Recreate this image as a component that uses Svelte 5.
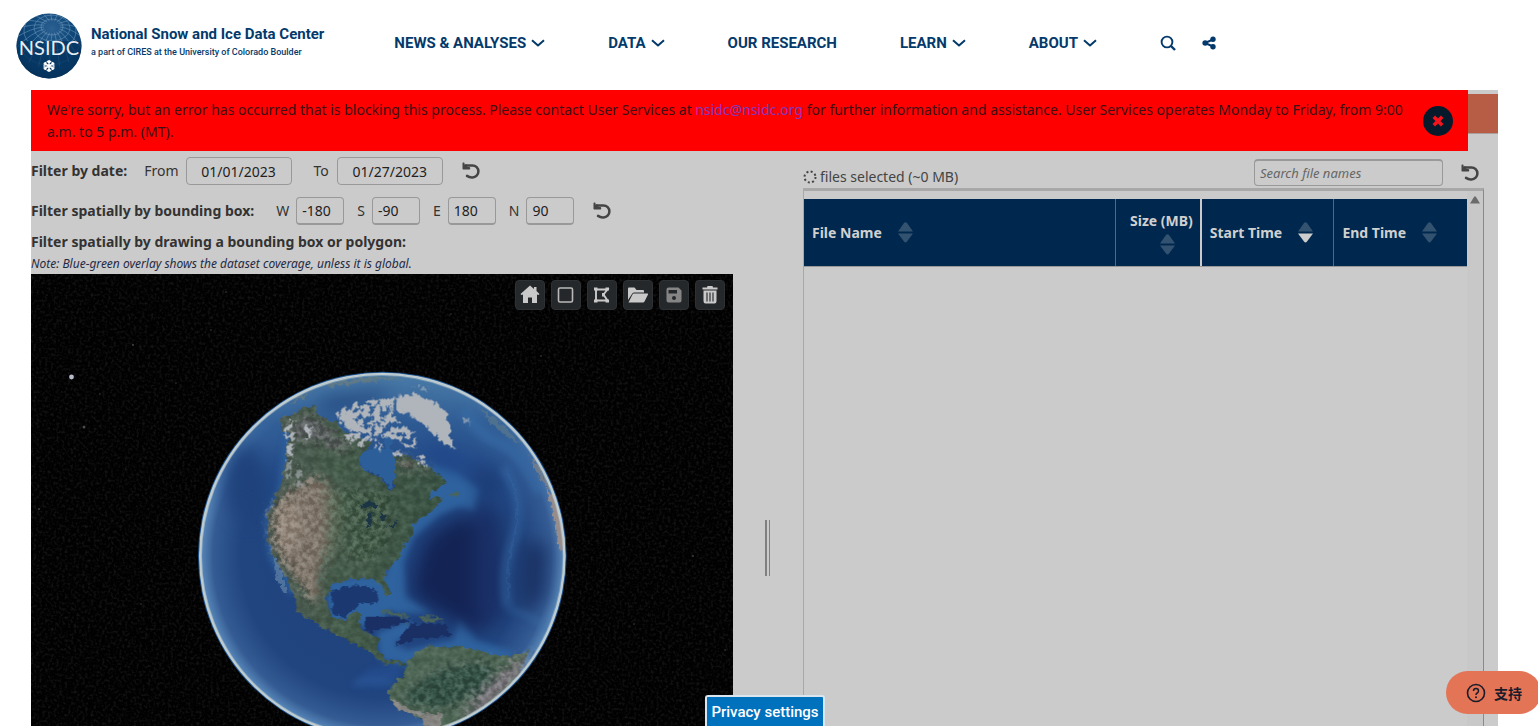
<script>
  const nav = [
    { label: 'NEWS & ANALYSES', menu: true },
    { label: 'DATA', menu: true },
    { label: 'OUR RESEARCH', menu: false },
    { label: 'LEARN', menu: true },
    { label: 'ABOUT', menu: true }
  ];
  const box = [
    { label: 'W', id: 'west', value: '-180' },
    { label: 'S', id: 'south', value: '-90' },
    { label: 'E', id: 'east', value: '180' },
    { label: 'N', id: 'north', value: '90' }
  ];
  const columns = [
    { label: 'File Name', cls: 'name', sorted: false },
    { label: 'Size (MB)', cls: 'size', sorted: false },
    { label: 'Start Time', cls: 'start', sorted: true },
    { label: 'End Time', cls: 'end', sorted: false }
  ];
  const spokes = Array.from({ length: 20 }, (_, i) => {
    const a = (i * Math.PI) / 10;
    return `M${36 + 8 * Math.cos(a)} ${14 + 6 * Math.sin(a)}Q${35 + 20 * Math.cos(a)} ${15 + 14 * Math.sin(a)} ${33 + 34 * Math.cos(a)} ${25 + 30 * Math.sin(a)}`;
  }).join('');
</script>

{#snippet undo()}
  <svg width="18" height="18" viewBox="0 0 18 18" aria-hidden="true">
    <path d="M4 3.400H10.500A5.900 6 0 0 1 10.500 15.400Q7.500 15.600 5 13.900" fill="none" stroke="#454545" stroke-width="2.5" stroke-linecap="round" />
    <path d="M.5 1.300Q.5.500 1.200.500H1.800Q2.500.500 2.500 1.300V2.400L4.500 2.200 5.500 5H7.500Q8.200 5.300 8.200 6V6.700Q8.200 7.400 7.500 7.400H1.300Q.5 7.400.5 6.700Z" fill="#454545" />
  </svg>
{/snippet}

<div class="page">
  <header>
    <a class="brand" href="/" aria-label="National Snow and Ice Data Center">
      <svg width="66" height="66" viewBox="0 0 66 66" aria-hidden="true">
        <defs>
          <radialGradient id="logo" cx=".54" cy=".24" r=".8">
            <stop offset="0" stop-color="#2d6193" />
            <stop offset=".35" stop-color="#10497b" />
            <stop offset=".75" stop-color="#083c6c" />
            <stop offset="1" stop-color="#03284e" />
          </radialGradient>
          <clipPath id="disc"><circle cx="33" cy="33" r="32.5" /></clipPath>
        </defs>
        <circle cx="33" cy="33" r="32.5" fill="url(#logo)" />
        <g clip-path="url(#disc)" fill="none" stroke="#8fb3d0" stroke-width=".7" opacity=".6">
          <path d={spokes} />
          <ellipse cx="36" cy="14" rx="11" ry="8" />
          <ellipse cx="36" cy="15" rx="18" ry="13" />
          <ellipse cx="34" cy="18" rx="26" ry="20" />
          <ellipse cx="33" cy="24" rx="32" ry="28" opacity=".5" />
        </g>
        <g clip-path="url(#disc)"><rect y="28" width="66" height="38" fill="#06345f" opacity=".7" /></g>
        <text x="33" y="42" text-anchor="middle" class="logo-text">NSIDC</text>
        <g stroke="#fff" stroke-width="1.5" transform="translate(33 53)">
          <path d="M0-6V6M-5.2-3 5.2 3M-5.2 3 5.2-3M-2-5 0-3 2-5M-2 5 0 3 2 5M-5.5-.8-2.8-1.5-3.5-4M5.5-.8 2.8-1.5 3.5-4M-5.5.8-2.8 1.5-3.5 4M5.5.8 2.8 1.5 3.5 4" fill="none" />
        </g>
      </svg>
      <span class="names">
        <strong>National Snow and Ice Data Center</strong>
        <small>a part of CIRES at the University of Colorado Boulder</small>
      </span>
    </a>
    <nav>
      {#each nav as item}
        <a href="/">
          {item.label}
          {#if item.menu}
            <svg width="14" height="8" viewBox="0 0 14 8" aria-hidden="true"><path d="M1 1.2 7 6.4 13 1.2" fill="none" stroke="#043a6b" stroke-width="2" stroke-linejoin="round" /></svg>
          {/if}
        </a>
      {/each}
      <span class="tools">
        <button type="button" aria-label="Search">
          <svg width="16" height="16" viewBox="0 0 16 16"><circle cx="7" cy="7" r="5.4" fill="none" stroke="#043a6b" stroke-width="1.9" /><path d="M11 11 15 15" stroke="#043a6b" stroke-width="2.4" /></svg>
        </button>
        <button type="button" aria-label="Share">
          <svg width="14" height="14" viewBox="0 0 14 14"><path d="M11 3.5 3 7 11 10.5" fill="none" stroke="#043a6b" stroke-width="2" /><g fill="#043a6b"><circle cx="11" cy="3.3" r="2.7" /><circle cx="3.2" cy="7" r="2.8" /><circle cx="11" cy="10.7" r="2.7" /></g></svg>
        </button>
      </span>
    </nav>
  </header>

  <main>
    <div class="banner"></div>
    <div class="alert" role="alert">
      <p>We're sorry, but an error has occurred that is blocking this process. Please contact User Services at <a href="mailto:nsidc@nsidc.org">nsidc@nsidc.org</a> for further information and assistance. User Services operates Monday to Friday, from 9:00 a.m. to 5 p.m. (MT).</p>
      <button type="button" aria-label="Dismiss">
        <svg width="30" height="30" viewBox="0 0 30 30"><circle cx="15" cy="15" r="15" fill="#071a2b" /><path d="M10.8 10.8 19.2 19.2M19.2 10.8 10.8 19.2" stroke="#f5141c" stroke-width="3.6" /></svg>
      </button>
    </div>

    <div class="columns">
      <section class="left">
        <div class="row">
          <b>Filter by date:</b>
          <label class="from" for="from">From</label>
          <input id="from" class="date" value="01/01/2023" />
          <label class="to" for="to">To</label>
          <input id="to" class="date" value="01/27/2023" />
          <button type="button" class="reset" aria-label="Reset dates">{@render undo()}</button>
        </div>
        <div class="row second">
          <b>Filter spatially by bounding box:</b>
          {#each box as side}
            <label class="side" for={side.id}>{side.label}</label>
            <input id={side.id} class="degree" value={side.value} />
          {/each}
          <button type="button" class="reset" aria-label="Reset bounding box">{@render undo()}</button>
        </div>
        <b class="draw">Filter spatially by drawing a bounding box or polygon:</b>
        <i class="note">Note: Blue-green overlay shows the dataset coverage, unless it is global.</i>
        <div class="map">
          <svg class="globe" viewBox="0 0 702 452" preserveAspectRatio="xMidYMin slice" role="img" aria-label="Globe" color-interpolation-filters="sRGB">
            <defs>
              <radialGradient id="sea">
                <stop offset="0" stop-color="#1f417c" />
                <stop offset=".78" stop-color="#21457f" />
                <stop offset=".93" stop-color="#345b93" />
                <stop offset="1" stop-color="#5888ba" />
              </radialGradient>
              <linearGradient id="arctic" x1="0" y1="0" x2="0" y2="1">
                <stop offset="0" stop-color="#4a7ba7" />
                <stop offset=".35" stop-color="#315f97" stop-opacity=".85" />
                <stop offset="1" stop-color="#285394" stop-opacity="0" />
              </linearGradient>
              <linearGradient id="land" x1="260" y1="0" x2="860" y2="0" gradientUnits="userSpaceOnUse">
                <stop offset="0" stop-color="#4d5a52" />
                <stop offset=".35" stop-color="#475d4c" />
                <stop offset="1" stop-color="#395344" />
              </linearGradient>
              <clipPath id="sphere"><circle cx="607" cy="618" r="545" /></clipPath>
              <filter id="rough" x="-10%" y="-10%" width="120%" height="120%">
                <feTurbulence type="fractalNoise" baseFrequency=".06" numOctaves="3" seed="4" result="n" />
                <feDisplacementMap in="SourceGraphic" in2="n" scale="26" xChannelSelector="R" yChannelSelector="G" />
              </filter>
              <filter id="ice" x="-10%" y="-10%" width="120%" height="120%">
                <feTurbulence type="fractalNoise" baseFrequency=".06" numOctaves="3" seed="14" result="n" />
                <feColorMatrix in="n" type="matrix" values="0 0 0 0 0  0 0 0 0 0  0 0 0 0 0  14 0 0 0 -6.2" result="gaps" />
                <feDisplacementMap in="SourceGraphic" in2="n" scale="34" xChannelSelector="R" yChannelSelector="G" result="d" />
                <feComposite in="d" in2="gaps" operator="in" />
              </filter>
              <filter id="terrain" x="-10%" y="-10%" width="120%" height="120%">
                <feTurbulence type="fractalNoise" baseFrequency=".05" numOctaves="4" seed="8" result="n" />
                <feDisplacementMap in="SourceGraphic" in2="n" scale="24" xChannelSelector="R" yChannelSelector="G" result="d" />
                <feColorMatrix in="n" type="matrix" values="2 0 0 0 -.55  2 0 0 0 -.55  2 0 0 0 -.55  0 0 0 0 .22" result="grain" />
                <feBlend in="grain" in2="d" mode="soft-light" result="b" />
                <feComposite in="b" in2="d" operator="in" />
              </filter>
              <filter id="hills" x="-10%" y="-10%" width="120%" height="120%">
                <feGaussianBlur in="SourceGraphic" stdDeviation="12" result="s" />
                <feTurbulence type="fractalNoise" baseFrequency=".06" numOctaves="4" seed="21" result="n" />
                <feDisplacementMap in="s" in2="n" scale="50" xChannelSelector="R" yChannelSelector="G" result="d" />
                <feColorMatrix in="n" type="matrix" values="2.6 0 0 0 -.85  2.6 0 0 0 -.85  2.6 0 0 0 -.85  0 0 0 0 .35" result="grain" />
                <feBlend in="grain" in2="d" mode="soft-light" result="b" />
                <feComposite in="b" in2="d" operator="in" />
              </filter>
              <filter id="soft" x="-20%" y="-20%" width="140%" height="140%"><feGaussianBlur stdDeviation="10" /></filter>
              <filter id="softer" x="-30%" y="-30%" width="160%" height="160%"><feGaussianBlur stdDeviation="26" /></filter>
              <filter id="sky" x="0" y="0" width="100%" height="100%">
                <feTurbulence type="fractalNoise" baseFrequency=".35" numOctaves="2" seed="3" />
                <feColorMatrix type="matrix" values="0 0 0 0 .13  0 0 0 0 .13  0 0 0 0 .13  1.6 0 0 0 -.74" />
              </filter>
            </defs>
            <rect width="702" height="452" fill="#010101" />
            <rect width="702" height="452" filter="url(#sky)" />
            <g fill="#b9bbcc">
              <circle cx="40.5" cy="103" r="2.4" /><circle cx="53" cy="153" r="1.5" opacity=".4" />
              <g opacity=".35"><circle cx="102" cy="71" r="1" /><circle cx="180" cy="56" r=".8" /><circle cx="69" cy="120" r=".7" /><circle cx="145" cy="109" r=".7" /><circle cx="195" cy="18" r=".8" /><circle cx="8" cy="235" r="1" /><circle cx="662" cy="282" r=".9" /><circle cx="694" cy="376" r=".8" /><circle cx="510" cy="82" r=".8" /><circle cx="420" cy="40" r=".7" /><circle cx="110" cy="330" r=".8" /><circle cx="603" cy="350" r=".8" /></g>
            </g>
            <g transform="translate(149 76) scale(.3333)">
              <circle cx="607" cy="618" r="553" fill="#1f5592" />
              <circle cx="607" cy="618" r="550" fill="#b9cad2" />
              <circle cx="607" cy="618" r="545" fill="url(#sea)" />
              <g clip-path="url(#sphere)">
                <rect x="40" y="70" width="1150" height="420" fill="url(#arctic)" />
                <!-- shallow coastal water -->
                <g filter="url(#soft)" fill="#2f639f">
                  <path d="M320 230 290 420 250 500 265 620 330 740 350 700 300 520 350 300Z" opacity=".75" />
                  <path d="M720 330 820 360 900 415 885 485 840 470 780 495 700 565 672 640 680 740 760 790 640 790 610 700 650 520 720 420Z" />
                  <path d="M435 690 610 670 650 760 590 830 450 830Z" />
                  <path d="M590 850 680 810 720 840 640 880 680 900 820 870 840 800 890 870 1010 910 960 940 690 950 600 930Z" />
                </g>
                <g filter="url(#softer)">
                  <path d="M715 640 750 560 840 500 900 520 950 600 965 760 900 850 770 780 700 730Z" fill="#132354" />
                  <path d="M900 450 960 500 980 700 960 830 880 800 880 500Z" fill="#192f66" />
                  <path d="M1030 570 1100 590 1090 740 1020 800Z" fill="#1a3163" />
                  <path d="M870 330 960 380 950 460 900 430Z" fill="#1b3b75" />
                  <ellipse cx="200" cy="400" rx="60" ry="110" fill="#1f427b" />
                  <path d="M420 150 620 120 600 150 440 185Z" fill="#21467c" />
                  <path d="M720 270 800 290 900 350 860 370 760 340Z" fill="#20478a" />
                </g>
                <g filter="url(#soft)" fill="none" stroke="#3a6fa9">
                  <path d="M970 350Q1040 460 1000 570T985 770" stroke-width="32" opacity=".4" />
                  <path d="M850 180Q900 260 960 280T1080 430" stroke-width="34" opacity=".5" />
                  <path d="M520 1000Q580 980 640 1000" stroke-width="20" opacity=".3" />
                  <path d="M985 780Q1060 790 1110 850" stroke-width="18" opacity=".35" />
                </g>
                <path filter="url(#rough)" fill="none" stroke="#3a6fa9" d="M985 370Q1030 460 1000 570T990 740" stroke-width="7" opacity=".28" />
                <g filter="url(#rough)">
                  <path d="M455 725Q510 690 590 720L590 760 545 760 495 800 455 795Z" fill="#1b3870" />
                  <path d="M560 800 660 800 690 812 640 830 560 850ZM700 820 800 825 815 860 700 865 640 890 670 850Z" fill="#1a2f64" />
                </g>
                <path filter="url(#soft)" d="M520 1010 560 960 660 940 660 985 600 1015Z" fill="#28549a" opacity=".5" />
                <!-- North America -->
                <path filter="url(#terrain)" fill="url(#land)" d="M300 205 350 185 385 165 415 170 412 195 455 210 500 245 545 270 580 270 560 300 540 320 540 345 570 370 605 380 620 415 640 415 640 360 635 320 670 315 710 330 740 350 790 380 800 395 760 425 740 445 780 440 790 450 750 490 700 520 700 550 670 590 665 620 620 660 615 690 635 735 620 740 600 700 570 685 520 690 460 700 440 740 450 800 490 810 520 785 545 790 535 830 570 850 595 865 590 900 620 930 680 935 670 945 610 940 570 905 500 870 440 840 390 810 350 785 340 730 320 680 280 620 262 570 262 500 290 430 310 380 320 300 325 250 300 235Z" />
                <g filter="url(#hills)">
                  <path d="M290 450 330 415 390 375 440 385 465 430 455 500 440 590 420 680 420 750 405 775 350 700 310 650 275 580 270 500Z" fill="#82786d" />
                  <path d="M285 470 340 450 370 540 330 610 295 590Z" fill="#94877b" />
                  <path d="M430 420 490 430 480 600 440 680 440 520Z" fill="#626f5b" opacity=".8" />
                  <path d="M645 325 690 320 710 360 680 370 655 350ZM715 325 740 350 760 370 730 370Z" fill="#706c66" />
                  <path d="M320 225 380 190 430 215 470 250 530 290 480 310 420 280 350 270Z" fill="#5b5f60" />
                  <path d="M480 410 600 420 640 450 620 600 520 650 490 560Z" fill="#405b44" opacity=".7" />
                </g>
                <path filter="url(#rough)" d="M280 620 300 650 320 720 310 725 285 670Z" fill="#5b7ca3" opacity=".8" />
                <!-- Hudson Bay and Great Lakes -->
                <path filter="url(#rough)" fill="#2c5f99" d="M540 310 590 290 640 300 645 370 635 425 615 395 590 375 545 350ZM610 250 635 250 635 310 615 300Z" />
                <path filter="url(#rough)" fill="#1b3545" d="M538 468 570 452 598 465 590 476 560 470ZM562 492 582 490 572 530 560 530ZM596 487 618 492 620 510 608 508ZM610 530 650 517 660 512 640 528Z" />
                <!-- snow and ice -->
                <g filter="url(#rough)" fill="#b0b5bc">
                  <path d="M650 140 700 130 750 150 795 180 808 220 808 260 825 295 790 280 765 255 740 230 690 195 650 180Z" />
                  <path d="M480 195 510 180 525 215 550 235 530 245 500 235ZM600 145 640 145 630 165 600 175ZM640 305 665 305 670 322 645 318Z" />
                </g>
                <g filter="url(#ice)" fill="#b0b5bc">
                  <path d="M470 185 520 165 590 145 645 140 640 200 710 255 710 300 650 270 600 260 540 290 490 265 520 240 480 220Z" />
                  <path d="M312 222 350 215 340 320 335 340 325 320ZM375 230 402 225 395 265 375 270ZM590 260 610 290 600 310 585 290ZM712 318 735 320 745 355 720 345Z" />
                  <path d="M318 330 335 330 335 390 320 390ZM350 350 368 345 368 410 352 410ZM700 105 750 112 740 125ZM845 205 875 210 870 225 850 222Z" opacity=".6" />
                </g>
                <!-- Caribbean islands -->
                <g filter="url(#rough)" fill="#4c6457"><path d="M600 780 650 785 695 805 640 795ZM715 800 770 800 790 815 730 815ZM672 820 690 823 680 828ZM800 432 835 425 840 440 815 442Z" /></g>
                <!-- South America -->
                <g filter="url(#terrain)">
                  <path d="M685 930 740 885 860 895 960 915 1000 915 1050 900 1000 1000 900 1100 780 1150 740 1140 730 1110 680 1090 630 1050 625 1020 665 980Z" fill="#4e6655" />
                  <path d="M630 1040 690 1080 790 1095 780 1140 730 1130 720 1100 660 1085Z" fill="#898784" />
                </g>
                <g filter="url(#hills)">
                  <path d="M700 1000 780 950 900 930 950 960 900 1030 800 1080 690 1070 660 1040Z" fill="#38554a" />
                  <path d="M970 950 1060 900 1020 990 900 1100 830 1110 870 1060Z" fill="#7b787d" />
                </g>
                <!-- Africa and Europe along the limb -->
                <g filter="url(#rough)">
                  <path d="M1100 410 1130 450 1155 560 1150 610 1135 590 1122 500Z" fill="#968c8b" />
                  <path d="M1050 315 1085 360 1115 420 1090 400 1060 350Z" fill="#7c7f85" opacity=".8" />
                  <path d="M900 175 960 215 1030 285 980 260 930 220Z" fill="#58778a" opacity=".7" />
                  <path d="M440 100 560 80 680 84 600 90 460 110ZM320 165 400 115 370 145Z" fill="#6d7d7c" opacity=".7" />
                </g>
              </g>
              <circle cx="607" cy="618" r="545" fill="none" stroke="#c2ced0" stroke-width="6" />
            </g>
          </svg>
          <div class="toolbar">
            <button type="button" aria-label="Home view"><svg viewBox="0 0 30 30"><path d="M15 5.5 5.5 14 6.5 15 8 14.5V23H13V17.5H17V23H22V14.5L23.5 15 24.5 14 21.5 11V7H19V9Z" fill="#c9c9c9" /></svg></button>
            <button type="button" aria-label="Draw bounding box"><svg viewBox="0 0 30 30"><rect x="7.5" y="8" width="14" height="14" rx="1.5" fill="none" stroke="#b9b9b9" stroke-width="1.6" /></svg></button>
            <button type="button" aria-label="Draw polygon"><svg viewBox="0 0 30 30"><path d="M9 9.5H20.5L16.5 14.5 20.5 20.5H9Z" fill="none" stroke="#c9c9c9" stroke-width="1.9" /><path d="M7 7.5H10.5V10.5H7ZM18.5 7.5H22V10.5H18.500ZM7 19.5H10.5V22.5H7ZM18.5 19.5H22V22.5H18.500ZM15 13H18V16.5H15Z" fill="#c9c9c9" /></svg></button>
            <button type="button" aria-label="Open file"><svg viewBox="0 0 30 30"><path d="M5 20V8.5Q5 7.5 6 7.5H11.5L13.5 10H20Q21 10 21 11V12.5H11Q9.5 12.5 9 14ZM5.5 22.5 9.5 14.5Q10 13.5 11 13.5H24.5Q25.5 13.5 25 14.5L21.5 21.5Q21 22.5 20 22.5Z" fill="#c9c9c9" /></svg></button>
            <button type="button" aria-label="Save file"><svg viewBox="0 0 30 30"><path fill-rule="evenodd" d="M9.5 7.5H19.5L22.5 10.5V20.5Q22.5 22.5 20.5 22.5H9.5Q7.5 22.5 7.5 20.5V9.5Q7.5 7.5 9.5 7.5ZM9.5 10V13.5H18V10ZM15 16A2 2 0 1 0 15 20 2 2 0 1 0 15 16Z" fill="#858585" /></svg></button>
            <button type="button" aria-label="Delete"><svg viewBox="0 0 30 30"><path d="M7.5 7.5H12L12.5 6H17.5L18 7.5H22.5V9.5H7.5ZM8.5 10.5H21.5V21Q21.5 23.5 19.5 23.5H10.5Q8.5 23.5 8.5 21Z" fill="#c9c9c9" /><path d="M12 12.5V21.5M15 12.5V21.5M18 12.5V21.5" stroke="#303336" stroke-width="1.2" /></svg></button>
          </div>
        </div>
      </section>

      <div class="splitter" role="separator"><span></span></div>

      <section class="right">
        <div class="filesbar">
          <span class="count">
            <svg width="14" height="14" viewBox="0 0 14 14" aria-hidden="true"><circle cx="7" cy="7" r="5.5" fill="none" stroke="#444" stroke-width="2" stroke-dasharray="2 2.32" /></svg>
            files selected (~0 MB)
          </span>
          <input type="search" placeholder="Search file names" aria-label="Search file names" />
          <button type="button" class="reset" aria-label="Reset search">{@render undo()}</button>
        </div>
        <div class="list">
          <table>
            <thead>
              <tr>
                {#each columns as col}
                  <th class={col.cls} scope="col">
                    <span class="head">
                      {col.label}
                      <svg width="15" height="21" viewBox="0 0 15 21" aria-hidden="true"><path d="M0 9.5 6 1Q7.5-.5 9 1L15 9.5Z" fill="#33526f" /><path d="M0 11.5H15L9 19.5Q7.5 21.5 6 19.5Z" fill={col.sorted ? '#cdcdcd' : '#33526f'} /></svg>
                    </span>
                  </th>
                {/each}
              </tr>
            </thead>
          </table>
          <div class="track"><svg width="10" height="8" viewBox="0 0 10 8" aria-hidden="true"><path d="M0 7.5 4 1Q5-.3 6 1L10 7.5Z" fill="#6b6b6b" /></svg></div>
        </div>
      </section>
    </div>
  </main>

  <button type="button" class="privacy">Privacy settings</button>
  <button type="button" class="support">
    <svg width="20" height="20" viewBox="0 0 20 20" aria-hidden="true"><circle cx="10" cy="10" r="8.5" fill="none" stroke="#1b1c2b" stroke-width="1.6" /><path d="M7.5 8Q7.5 5.5 10 5.5T12.5 8Q12.5 9.2 11.2 10T10 12" fill="none" stroke="#1b1c2b" stroke-width="1.5" /><circle cx="10" cy="14.3" r="1" fill="#1b1c2b" /></svg>
    支持
  </button>
</div>

<style>
  :global(body) { margin: 0; background: #fff; }
  .page, .page :global(*) { box-sizing: border-box; }
  .page { height: 100vh; display: flex; flex-direction: column; overflow: hidden; position: relative; font: 14px/22px "Noto Sans", sans-serif; color: #333; }
  button { border: 0; padding: 0; background: none; font: inherit; cursor: pointer; display: flex; align-items: center; justify-content: center; }
  input { font: inherit; color: #222; background: transparent; border: 1px solid #999; border-radius: 4px; outline: 0; min-width: 0; }

  header { display: flex; align-items: center; height: 90px; padding: 2px 0 0 16px; flex: none; font-family: Roboto, sans-serif; }
  .brand { display: flex; align-items: center; gap: 9px; text-decoration: none; color: #043a6b; white-space: nowrap; }
  .names { display: flex; flex-direction: column; padding-bottom: 9px; }
  .names strong { font-size: 15px; line-height: 20px; }
  .names small { font-size: 9px; line-height: 16px; font-weight: 500; }
  .logo-text { font: 20px Lato, sans-serif; fill: #e6edf3; }
  nav { display: flex; align-items: center; gap: 63px; margin-left: 70px; padding-bottom: 7px; white-space: nowrap; }
  nav a { display: flex; align-items: center; gap: 5px; color: #043a6b; text-decoration: none; font-size: 15px; line-height: 20px; font-weight: 700; }
  .tools { display: flex; align-items: center; gap: 26px; }

  main { flex: 1; min-height: 0; position: relative; display: flex; flex-direction: column; margin: 0 40px 0 31px; padding-top: 4px; background: #cbcbcb; }
  .banner { height: 40px; flex: none; background: #b75d45; border-bottom: 1px solid #a9a09e; }
  .alert { position: absolute; top: 0; left: 0; right: 30px; padding: 9px 15px 8px 16px; background: #f00; display: flex; gap: 8px; align-items: center; color: #3a1016; }
  .alert p { margin: 0; flex: 1; }
  .alert a { color: #7d3ac0; text-decoration: none; }

  .columns { flex: 1; min-height: 0; display: grid; grid-template-columns: 702fr 70px 681fr; padding: 23px 14px 0 0; }
  .left { display: flex; flex-direction: column; min-width: 0; min-height: 0; white-space: nowrap; }
  .row { display: flex; align-items: center; height: 28px; flex: none; }
  .second { margin-top: 12px; margin-bottom: 5px; }
  .date { width: 106px; height: 28px; text-align: center; padding: 0; }
  .from { margin: 0 7px 0 17px; }
  .to { margin: 0 8px 0 22px; }
  .side { margin: 0 7px 0 13px; }
  .side:first-of-type { margin-left: 22px; }
  .degree { width: 48px; height: 28px; padding: 0 5px; border-bottom-width: 2px; }
  .row .reset { margin-left: 19px; }
  .draw { line-height: 24px; }
  .note { font-size: 12px; line-height: 20px; color: #1f2a44; }
  .map { position: relative; flex: 1; min-height: 0; background: #000; overflow: hidden; }
  .globe { position: absolute; inset: 0; width: 100%; height: 100%; display: block; }
  .toolbar { position: absolute; top: 6px; right: 8px; display: flex; gap: 6px; }
  .toolbar button { width: 30px; height: 30px; border-radius: 4px; background: #25282b; border: 1px solid #2e3133; }
  .toolbar svg { width: 30px; height: 30px; flex: none; }

  .splitter { display: flex; justify-content: center; padding: 363px 2px 0 0; }
  .splitter span { width: 5px; height: 56px; border: solid #808080; border-width: 0 1px 0 2px; }

  .right { display: flex; flex-direction: column; min-width: 0; min-height: 0; }
  .filesbar { display: flex; align-items: center; height: 31px; flex: none; padding-right: 5px; }
  .count { display: flex; align-items: center; gap: 3px; flex: 1; padding-top: 9px; white-space: nowrap; color: #444; }
  .filesbar input { width: 189px; height: 27px; padding: 0 5px; font-size: 13px; border-width: 2px 1px 1px; }
  .filesbar input::placeholder { color: #666; font-style: italic; opacity: 1; }
  .filesbar .reset { margin-left: 18px; }
  .list { flex: 1; min-height: 0; display: flex; align-items: flex-start; border: solid #a8a8a8; border-width: 3px 1px 0; border-right-color: #8a8a8a; }
  table { flex: 1; table-layout: fixed; margin-top: 8px; border-collapse: separate; border-spacing: 0; color: #d0d0d0; border-bottom: 1px solid #999; }
  th { height: 67px; background: #00284e; padding: 0 0 0 8px; text-align: left; line-height: 22px; border-right: 1px solid #56687c; white-space: nowrap; }
  th.name { width: 47%; }
  th.size { width: 13%; padding: 0 7px; border-right: 2px solid #cbcbcb; }
  th.start { width: 20%; }
  th.end { width: 20%; border-right: 0; }
  .head { display: flex; align-items: center; gap: 16px; }
  .size .head { flex-direction: column; align-items: flex-end; gap: 2px; }
  .size svg { margin-right: 18px; }
  .track { width: 16px; align-self: stretch; background: #c8c8c8; padding-top: 5px; display: flex; justify-content: center; }

  .privacy { position: absolute; left: 50%; bottom: 0; margin-left: -64px; width: 120px; height: 31px; background: #0071bc; border: 2px solid #d9e6ef; border-bottom: 0; border-radius: 3px 3px 0 0; color: #fff; font: 500 15px Roboto, sans-serif; white-space: nowrap; }
  .support { position: absolute; right: -3px; bottom: 12px; height: 43px; padding: 0 19px 0 20px; gap: 8px; border-radius: 22px; background: #e37455; color: #1b1c2b; font: 700 14px "Noto Sans CJK SC", sans-serif; }
</style>
